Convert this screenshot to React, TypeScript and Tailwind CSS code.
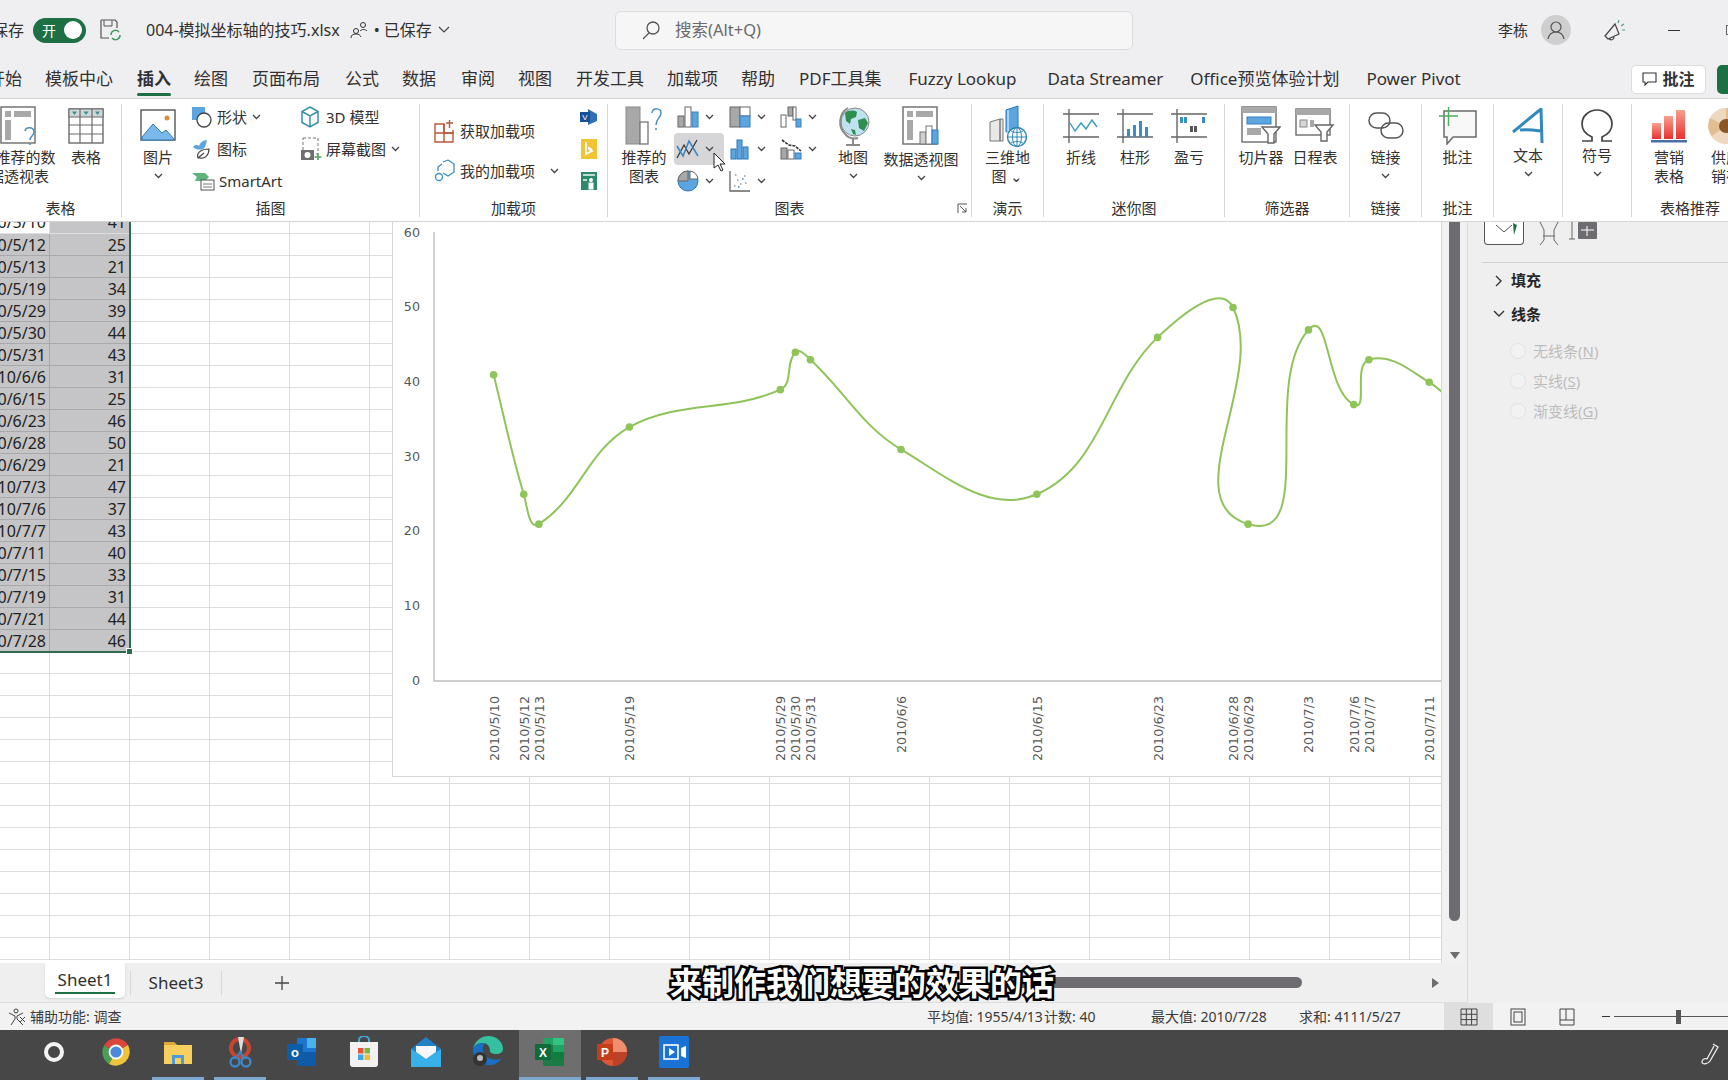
import React from "react";

const GREY = "#a8a8a8";
const DARK = "#6b6b6b";
const BLUE = "#5ba6e1";

function Chev({ className = "" }: { className?: string }) {
  return (
    <svg width="9" height="6" viewBox="0 0 9 6" className={"shrink-0 " + className}>
      <path d="M1 1l3.5 3.5L8 1" fill="none" stroke="#444" strokeWidth="1.3" />
    </svg>
  );
}

function Big({ w, icon, lines, chev, className = "" }: { w: string; icon: React.ReactNode; lines: string[]; chev?: boolean; className?: string }) {
  return (
    <div className={"flex flex-col items-center shrink-0 " + w + " " + className}>
      <div className="h-[44px] w-full flex items-center justify-center shrink-0">{icon}</div>
      {lines.map((l, i) => (
        <div key={i} className="leading-[19px] h-[19px] whitespace-nowrap">{l}</div>
      ))}
      {chev && <div className="h-[17px] flex items-center"><Chev /></div>}
    </div>
  );
}

function Small({ icon, label, chev, className = "" }: { icon: React.ReactNode; label?: string; chev?: boolean; className?: string }) {
  return (
    <div className={"h-[32px] flex items-center whitespace-nowrap " + className}>
      {icon}
      {label && <span className="ml-[4px]">{label}</span>}
      {chev && <Chev className="ml-[5px]" />}
    </div>
  );
}

function ChartBtn({ icon, active }: { icon: React.ReactNode; active?: boolean }) {
  return (
    <div className={"h-[32px] w-[50px] flex items-center rounded pl-[2px] " + (active ? "bg-[#d6d5d7]" : "")}>
      <div className="w-[24px] flex justify-center">{icon}</div>
      <Chev className="ml-[5px]" />
    </div>
  );
}

function Group({ w, label, children, extra }: { w: string; label?: string; children: React.ReactNode; extra?: React.ReactNode }) {
  return (
    <div className={"shrink-0 flex flex-col h-[113px] mt-[5px] border-r border-[#d6d6d6] " + w}>
      <div className="h-[96px] flex">{children}</div>
      <div className="h-[17px] leading-[17px] flex justify-center items-center relative overflow-visible whitespace-nowrap">
        {label}
        {extra}
      </div>
    </div>
  );
}

/* ---------- ribbon icons ---------- */
const PivotRec = () => (
  <svg width="38" height="40" viewBox="0 0 38 40">
    <rect x="1" y="1" width="34" height="36" fill="#fff" stroke={DARK} strokeWidth="1.4" />
    <rect x="5" y="5" width="6" height="6" fill={GREY} /><rect x="14" y="5" width="17" height="6" fill={GREY} />
    <rect x="5" y="14" width="6" height="20" fill={GREY} />
    <path d="M25 25c1-5 9-4 9 1 0 4-4 4-4 8M30 37v2" fill="none" stroke="#4a90c2" strokeWidth="1.6" />
  </svg>
);
const TableIc = () => (
  <svg width="36" height="36" viewBox="0 0 36 36">
    <rect x="1" y="1" width="34" height="34" fill="#fff" stroke={DARK} strokeWidth="1.4" />
    <rect x="1" y="1" width="34" height="8" fill="#cfd8d8" stroke={DARK} />
    <path d="M12 1v34M24 1v34M1 17h34M1 26h34" stroke={DARK} strokeWidth="1.2" />
    <path d="M4 3.5h5L6.5 7zM15.5 3.5h5L18 7zM27 3.5h5L29.5 7z" fill="#3f8f93" />
  </svg>
);
const PictureIc = () => (
  <svg width="36" height="34" viewBox="0 0 36 34">
    <rect x="1" y="1" width="34" height="30" fill="#fff" stroke="#555" strokeWidth="1.4" />
    <path d="M2 28l11-13 9 9 4-3 8 9v1H2z" fill="#7bb8ea" stroke="#2f7ab8" />
    <circle cx="27" cy="9" r="2.5" fill="#e08a3c" />
  </svg>
);
const ShapeIc = () => (
  <svg width="22" height="22" viewBox="0 0 22 22">
    <rect x="1" y="1" width="13" height="13" fill={BLUE} />
    <circle cx="13" cy="14" r="7" fill="#fff" stroke="#444" strokeWidth="1.3" />
  </svg>
);
const IconIc = () => (
  <svg width="22" height="22" viewBox="0 0 22 22">
    <path d="M2 9c2-3 5-2 6-1 1-3 4-6 8-6-1 3-1 7-4 9-3 1-7 1-10-2z" fill={BLUE} />
    <path d="M7 20c-2-5 3-9 11-9 0 6-4 10-9 9zM7 20l6-5" fill="#fff" stroke="#444" strokeWidth="1.2" />
  </svg>
);
const SmartArtIc = () => (
  <svg width="24" height="20" viewBox="0 0 24 20">
    <path d="M1 2h13l4 4-4 4H4l2-4z" fill="#5fb37c" />
    <rect x="10" y="9" width="13" height="10" fill="#fff" stroke="#555" />
    <path d="M12 13h9M12 16h9" stroke="#777" />
  </svg>
);
const Box3D = () => (
  <svg width="20" height="22" viewBox="0 0 20 22">
    <path d="M10 1l8 4.5v11L10 21l-8-4.5v-11zM2 5.5l8 4.5 8-4.5M10 10v11" fill="#fff" stroke="#3a8ea8" strokeWidth="1.5" />
  </svg>
);
const ScreenIc = () => (
  <svg width="22" height="24" viewBox="0 0 22 24">
    <rect x="3" y="1" width="15" height="16" fill="none" stroke="#777" strokeDasharray="3 2" />
    <rect x="1" y="13" width="13" height="10" fill="#6f6f6f" />
    <circle cx="7.5" cy="18" r="3" fill="#fff" />
    <path d="M18 16v7M14.5 20h7" stroke="#54a45f" strokeWidth="1.6" />
  </svg>
);
const GetAddin = () => (
  <svg width="22" height="24" viewBox="0 0 22 24">
    <path d="M1 5h9v9H1zM10 14h9v9h-9zM1 14h9v9H1zM12 4h7M15.5 1v8" fill="#fff" stroke="#b9583a" strokeWidth="1.4" />
    <path d="M10 5v9h9v-3" fill="none" stroke="#b9583a" strokeWidth="1.4" />
  </svg>
);
const MyAddin = () => (
  <svg width="22" height="24" viewBox="0 0 22 24">
    <path d="M14 1l6 4v8l-6 4-5-3M9 3l5-2M4 12v-4l4-3" fill="none" stroke="#3a8ec4" strokeWidth="1.3" />
    <circle cx="5" cy="18" r="3.5" fill="#fff" stroke="#3a8ec4" strokeWidth="1.3" />
  </svg>
);
const Visio = () => (
  <svg width="18" height="18" viewBox="0 0 18 18">
    <path d="M8 1l9 5v7l-9 4z" fill="#2f6fb5" /><rect x="0" y="4" width="10" height="10" fill="#1b4f93" />
    <text x="5" y="12" fontSize="8" fill="#fff" textAnchor="middle" fontFamily="Liberation Sans">V</text>
  </svg>
);
const Bing = () => (
  <svg width="16" height="20" viewBox="0 0 16 20">
    <rect width="16" height="20" fill="#f2c335" />
    <path d="M5 3v12l6-3-3-2v-1l3 1.5" fill="none" stroke="#fff" strokeWidth="1.8" />
  </svg>
);
const People = () => (
  <svg width="16" height="18" viewBox="0 0 16 18">
    <rect width="16" height="18" fill="#2c8a6a" />
    <rect x="2" y="2" width="12" height="2" fill="#fff" opacity=".7" />
    <circle cx="10" cy="8" r="2" fill="#fff" /><rect x="7.5" y="10.5" width="5" height="7" fill="#fff" />
    <rect x="2" y="7" width="4" height="2" fill="#fff" opacity=".7" />
  </svg>
);
const RecChart = () => (
  <svg width="38" height="40" viewBox="0 0 38 40">
    <rect x="1" y="1" width="14" height="37" fill={GREY} stroke="#8a8a8a" />
    <rect x="15" y="16" width="8" height="22" fill="#fff" stroke="#777" strokeWidth="1.3" />
    <path d="M27 7c1-6 9-5 9 0 0 5-5 5-5 12M31 22v2" fill="none" stroke="#4a90c2" strokeWidth="1.5" />
  </svg>
);
const ColIc = () => (
  <svg width="22" height="22" viewBox="0 0 22 22">
    <rect x="1" y="10" width="6" height="11" fill={GREY} stroke="#666" /><rect x="8" y="1" width="6" height="20" fill="#fff" stroke="#666" /><rect x="15" y="6" width="6" height="15" fill={BLUE} stroke="#3a7ebd" />
  </svg>
);
const Hier = () => (
  <svg width="22" height="22" viewBox="0 0 22 22">
    <rect x="1" y="1" width="10" height="20" fill={GREY} stroke="#666" /><rect x="11" y="1" width="10" height="9" fill="#fff" stroke="#666" /><rect x="11" y="10" width="10" height="11" fill={BLUE} stroke="#3a7ebd" />
  </svg>
);
const Water = () => (
  <svg width="22" height="22" viewBox="0 0 22 22">
    <rect x="1" y="9" width="5" height="12" fill="#fff" stroke="#666" /><rect x="8" y="1" width="5" height="9" fill={GREY} stroke="#666" /><rect x="13" y="1" width="3" height="13" fill="#fff" stroke="#666" /><rect x="16" y="13" width="5" height="8" fill={BLUE} stroke="#3a7ebd" />
  </svg>
);
const LineIc = () => (
  <svg width="24" height="22" viewBox="0 0 24 22">
    <path d="M1 20L8 7l5 9 8-14" fill="none" stroke="#3a3a3a" strokeWidth="1.3" />
    <path d="M1 8l6 10 6-15 9 15" fill="none" stroke="#3a86c4" strokeWidth="1.5" />
  </svg>
);
const Stat = () => (
  <svg width="20" height="22" viewBox="0 0 20 22">
    <rect x="1" y="11" width="5" height="10" fill={BLUE} stroke="#2f76b5" /><rect x="7" y="2" width="5" height="19" fill={BLUE} stroke="#2f76b5" /><rect x="13" y="9" width="5" height="12" fill={BLUE} stroke="#2f76b5" />
  </svg>
);
const Combo = () => (
  <svg width="22" height="22" viewBox="0 0 22 22">
    <rect x="1" y="10" width="6" height="11" fill={GREY} stroke="#666" /><rect x="8" y="12" width="6" height="9" fill="#fff" stroke="#666" /><rect x="15" y="15" width="6" height="6" fill={BLUE} stroke="#3a7ebd" />
    <path d="M2 2l7 5 6 1 6 5" fill="none" stroke="#333" strokeWidth="1.6" strokeDasharray="3 1" />
  </svg>
);
const Pie = () => (
  <svg width="22" height="22" viewBox="0 0 22 22">
    <circle cx="11" cy="11" r="10" fill={BLUE} stroke="#2f76b5" />
    <path d="M11 11V1a10 10 0 0 0-10 10z" fill={GREY} stroke="#666" />
    <path d="M13 9V1a9 9 0 0 1 8 8z" fill="#fff" stroke="#666" />
  </svg>
);
const Scatter = () => (
  <svg width="22" height="22" viewBox="0 0 22 22">
    <path d="M1 1v20h20" fill="none" stroke="#666" strokeWidth="1.3" />
    <path d="M5 16h1.5M8 10h1.5M11 14h1.5M15 6h1.5M6 5h1.5M16 13h1.5" stroke="#999" strokeWidth="1.5" />
    <path d="M9 17h1.5M13 9h1.5" stroke="#3a86c4" strokeWidth="1.5" />
  </svg>
);
const Globe = () => (
  <svg width="34" height="42" viewBox="0 0 34 42">
    <circle cx="19" cy="17" r="14" fill="#bfe2f0" stroke="#888" />
    <path d="M9 8c4-3 9-3 12-1l-1 5-5 2-1 5-4-3zM22 15l7-2 3 5-4 8-5-3zM15 24l4 1 1 5-3-1z" fill="#2f8f4e" />
    <path d="M12 3C3 8 1 22 10 30c3 3 8 4 12 3" fill="none" stroke="#8a8a8a" strokeWidth="2" />
    <path d="M17 34v5M10 40h14" stroke="#8a8a8a" strokeWidth="2" />
  </svg>
);
const PivotChart = () => (
  <svg width="38" height="40" viewBox="0 0 38 40">
    <rect x="1" y="1" width="34" height="37" fill="#fff" stroke={DARK} strokeWidth="1.4" />
    <rect x="5" y="5" width="6" height="6" fill={GREY} /><rect x="14" y="5" width="17" height="6" fill={GREY} />
    <rect x="5" y="14" width="6" height="20" fill={GREY} />
    <rect x="18" y="26" width="6" height="12" fill="#cfcfcf" stroke="#777" /><rect x="24" y="20" width="6" height="18" fill="#fff" stroke="#777" /><rect x="30" y="24" width="6" height="14" fill={BLUE} stroke="#3a7ebd" />
  </svg>
);
const Map3D = () => (
  <svg width="40" height="44" viewBox="0 0 40 44">
    <path d="M2 18l10-3v22H2zM12 15h3v22h-3z" fill="#e8e8e8" stroke="#777" />
    <path d="M18 6l12-4v26H18z" fill={BLUE} stroke="#2f76b5" /><path d="M20 6v28" stroke="#fff" />
    <circle cx="29" cy="33" r="9.5" fill="#fff" stroke="#2f86b8" strokeWidth="1.4" />
    <path d="M20 33h18M29 24v18M23 27c4 2 8 2 12 0M23 39c4-2 8-2 12 0" fill="none" stroke="#2f86b8" />
    <ellipse cx="29" cy="33" rx="4.5" ry="9.5" fill="none" stroke="#2f86b8" />
  </svg>
);
const SparkLine = () => (
  <svg width="36" height="34" viewBox="0 0 36 34">
    <path d="M0 5h36M0 28h36M6 0v34" stroke="#666" strokeWidth="1.4" />
    <path d="M7 14l5 8 6-8 5 6 6-9 5 7" fill="none" stroke="#3a9fb8" strokeWidth="1.4" />
  </svg>
);
const SparkCol = () => (
  <svg width="36" height="34" viewBox="0 0 36 34">
    <path d="M0 5h36M0 28h36M6 0v34" stroke="#666" strokeWidth="1.4" />
    <path d="M10 20h3v8h-3zM16 16h3v12h-3zM22 12h3v16h-3zM28 18h3v10h-3z" fill="#3a8ec4" />
  </svg>
);
const SparkWin = () => (
  <svg width="36" height="34" viewBox="0 0 36 34">
    <path d="M0 5h36M0 28h36M6 0v34" stroke="#666" strokeWidth="1.4" />
    <path d="M9 8h3v6H9zM13 8h3v6h-3zM31 8h3v6h-3z" fill="#3a8ec4" />
    <path d="M19 17h3v6h-3zM23 17h3v6h-3z" fill="#555" />
  </svg>
);
const Funnel = ({ x, y }: { x: number; y: number }) => (
  <path d={`M${x} ${y}h18l-6 7v9h-6v-9z`} fill="#fff" stroke="#666" strokeWidth="1.4" />
);
const Slicer = () => (
  <svg width="40" height="40" viewBox="0 0 40 40">
    <rect x="1" y="1" width="34" height="35" fill="#fff" stroke={DARK} strokeWidth="1.4" />
    <rect x="1" y="1" width="34" height="6" fill={GREY} />
    <rect x="6" y="11" width="24" height="7" fill={BLUE} stroke="#3a7ebd" />
    <rect x="6" y="22" width="14" height="7" fill={GREY} />
    <Funnel x={21} y={21} />
  </svg>
);
const Timeline = () => (
  <svg width="40" height="36" viewBox="0 0 40 36">
    <rect x="1" y="1" width="34" height="26" fill="#fff" stroke={DARK} strokeWidth="1.4" />
    <rect x="1" y="1" width="34" height="6" fill={GREY} />
    <rect x="5" y="12" width="7" height="7" fill="#d6d6d6" stroke="#888" /><rect x="15" y="12" width="4" height="7" fill={GREY} />
    <Funnel x={20} y={17} />
  </svg>
);
const LinkIc = () => (
  <svg width="36" height="28" viewBox="0 0 36 28">
    <rect x="1" y="1" width="21" height="15" rx="7.5" fill="none" stroke="#555" strokeWidth="1.5" />
    <rect x="13" y="11" width="22" height="15" rx="7.5" fill="none" stroke="#555" strokeWidth="1.5" />
  </svg>
);
const CommentIc = () => (
  <svg width="38" height="38" viewBox="0 0 38 38">
    <path d="M5 4h32v26H14l-6 7v-7H5z" fill="#f8f8f8" stroke="#6b6b6b" strokeWidth="1.5" />
    <path d="M0 9h19M9.5 0v19" stroke="#4caf62" strokeWidth="1.4" />
  </svg>
);
const TextA = () => (
  <svg width="32" height="36" viewBox="0 0 32 36">
    <path d="M1 24C11 16 20 8 29 1l1 34M8 22c7-1 14 0 21 1" fill="none" stroke="#3488c0" strokeWidth="3" />
  </svg>
);
const Omega = () => (
  <svg width="32" height="34" viewBox="0 0 32 34">
    <path d="M1 32h10v-4C4 25 1 20 1 15 1 7 8 1 16 1s15 6 15 14c0 5-3 10-10 13v4h10" fill="none" stroke="#444" strokeWidth="1.7" />
  </svg>
);
const Bars = () => (
  <svg width="36" height="34" viewBox="0 0 36 34">
    <defs><linearGradient id="rb" x1="0" y1="0" x2="0" y2="1"><stop offset="0" stopColor="#f7a08e" /><stop offset="1" stopColor="#e9302f" /></linearGradient></defs>
    <rect x="1" y="14" width="9" height="16" fill="url(#rb)" /><rect x="13" y="7" width="9" height="23" fill="url(#rb)" /><rect x="25" y="1" width="9" height="29" fill="url(#rb)" />
    <rect x="0" y="31" width="36" height="2.5" fill="#4a6fa5" />
  </svg>
);
const Supply = () => (
  <svg width="40" height="38" viewBox="0 0 40 38">
    <circle cx="20" cy="19" r="18" fill="#eed9c0" />
    <path d="M20 1a18 18 0 0 1 16 10L20 19zM4 11a18 18 0 0 0 2 18l14-10z" fill="#e3bd92" />
    <circle cx="20" cy="19" r="7" fill="#8a5527" />
  </svg>
);
const SaveIc = () => (
  <svg width="22" height="22" viewBox="0 0 22 22">
    <path d="M1 1h14l2 2v6M1 1v18h8" fill="none" stroke="#555" strokeWidth="1.2" />
    <path d="M4 1v6h8V1" fill="none" stroke="#555" />
    <path d="M11 16a4.5 4.5 0 0 1 8-3M20 16a4.5 4.5 0 0 1-8 3" fill="none" stroke="#3f9c5f" strokeWidth="1.5" />
  </svg>
);

/* ---------- taskbar icons ---------- */
const Chrome = () => (
  <svg width="28" height="28" viewBox="0 0 28 28">
    <path d="M14 14L2 7.5A14 14 0 0 1 26.1 7z" fill="#d9483b" />
    <path d="M14 14l-7 12A14 14 0 0 1 2 7.5z" fill="#4a9e55" />
    <path d="M14 14l12-7A14 14 0 0 1 7 26z" fill="#f0c33c" />
    <circle cx="14" cy="14" r="6.5" fill="#4a89dc" stroke="#fff" strokeWidth="1.8" />
  </svg>
);
const Files = () => (
  <svg width="28" height="28" viewBox="0 0 28 28">
    <path d="M0 4h10l3 3h15v19H0z" fill="#f6cf5e" /><path d="M0 4h10l3 3H0z" fill="#dfa93a" />
    <path d="M8 26v-9h12v9z" fill="#4f9ad8" /><rect x="11" y="20" width="6" height="6" fill="#f6cf5e" />
  </svg>
);
const Snip = () => (
  <svg width="26" height="32" viewBox="0 0 26 32">
    <circle cx="13" cy="12" r="11" fill="#c8452f" />
    <circle cx="13" cy="12" r="7" fill="#474747" />
    <path d="M11 1l3 17 3-17z" fill="#ddd" />
    <circle cx="8" cy="26" r="4.5" fill="none" stroke="#3c86c9" strokeWidth="2.4" /><circle cx="19" cy="26" r="4.5" fill="none" stroke="#3c86c9" strokeWidth="2.4" />
    <path d="M9 22l4-6 4 6" stroke="#3c86c9" fill="none" strokeWidth="2" />
  </svg>
);
const Outlook = () => (
  <svg width="30" height="30" viewBox="0 0 30 30">
    <rect x="10" y="1" width="19" height="28" fill="#1c76cf" /><rect x="20" y="1" width="9" height="10" fill="#4cb1ea" /><rect x="10" y="15" width="19" height="14" fill="#0f5ba8" />
    <rect x="0" y="7" width="16" height="16" fill="#0d5da9" />
    <text x="8" y="20" fontSize="13" fontWeight="700" fill="#fff" textAnchor="middle" fontFamily="Liberation Sans">o</text>
  </svg>
);
const Store = () => (
  <svg width="30" height="32" viewBox="0 0 30 32">
    <path d="M10 7V4a5 4 0 0 1 10 0v3" fill="none" stroke="#3faad8" strokeWidth="2" />
    <path d="M1 6h28v22a3 3 0 0 1-3 3H4a3 3 0 0 1-3-3z" fill="#f2f2f2" />
    <rect x="9" y="12" width="5.5" height="5.5" fill="#e5543c" /><rect x="15.5" y="12" width="5.5" height="5.5" fill="#79b843" /><rect x="9" y="18.5" width="5.5" height="5.5" fill="#3fa8e4" /><rect x="15.5" y="18.5" width="5.5" height="5.5" fill="#f4b93a" />
  </svg>
);
const Mail = () => (
  <svg width="32" height="30" viewBox="0 0 32 30">
    <path d="M1 12L16 0l15 12v18H1z" fill="#1f82c9" />
    <path d="M1 12l15 10 15-10v18H1z" fill="#38b0ea" />
    <path d="M6 9h20v6l-10 7-10-7z" fill="#f4f6f8" />
  </svg>
);
const Edge = () => (
  <svg width="32" height="34" viewBox="0 0 32 34">
    <path d="M1 14C3 5 10 1 16 1c9 0 15 6 15 13 0 3-3 5-7 5-3 0-6-1-6-3 0-5-3-8-7-8C6 8 3 10 1 14z" fill="#35c1a0" />
    <path d="M1 14c0 8 5 15 14 16 7 1 12-3 15-7-5 3-11 2-15-1-4-3-6-9-2-14-5 0-10 1-12 6z" fill="#1b6fc4" />
    <circle cx="8" cy="24" r="7" fill="#333" /><circle cx="8" cy="23" r="3" fill="#bbb" />
  </svg>
);
const Excel = () => (
  <svg width="30" height="30" viewBox="0 0 30 30">
    <rect x="8" y="1" width="21" height="28" rx="1.5" fill="#1c7a46" /><rect x="18" y="1" width="11" height="7" fill="#33c481" /><rect x="18" y="8" width="11" height="7" fill="#21a366" /><rect x="18" y="15" width="11" height="7" fill="#107c41" /><rect x="8" y="1" width="10" height="7" fill="#21a366" />
    <rect x="0" y="7" width="16" height="16" rx="1" fill="#0f6b3a" />
    <text x="8" y="20" fontSize="12" fontWeight="700" fill="#fff" textAnchor="middle" fontFamily="Liberation Sans">X</text>
  </svg>
);
const Ppt = () => (
  <svg width="30" height="30" viewBox="0 0 30 30">
    <circle cx="16" cy="15" r="14" fill="#d9583a" /><path d="M16 1a14 14 0 0 1 14 14H16z" fill="#ef8d6e" /><path d="M16 15h14a14 14 0 0 1-14 14z" fill="#bb4226" />
    <rect x="0" y="7" width="16" height="16" rx="1" fill="#c43e1c" />
    <text x="8" y="20" fontSize="12" fontWeight="700" fill="#fff" textAnchor="middle" fontFamily="Liberation Sans">P</text>
  </svg>
);
const VideoIc = () => (
  <svg width="30" height="32" viewBox="0 0 30 32">
    <rect width="30" height="32" rx="2" fill="#1a73d4" />
    <rect x="5" y="9" width="14" height="14" fill="none" stroke="#fff" strokeWidth="1.6" />
    <path d="M10 12l6 4-6 4z" fill="#fff" /><path d="M22 12l5-2v12l-5-2z" fill="#fff" />
  </svg>
);

/* ---------- data ---------- */
const DATA: [string, number, number][] = [
  ["2010/5/10", 41, 0], ["2010/5/12", 25, 2], ["2010/5/13", 21, 3], ["2010/5/19", 34, 9], ["2010/5/29", 39, 19],
  ["2010/5/30", 44, 20], ["2010/5/31", 43, 21], ["2010/6/6", 31, 27], ["2010/6/15", 25, 36], ["2010/6/23", 46, 44],
  ["2010/6/28", 50, 49], ["2010/6/29", 21, 50], ["2010/7/3", 47, 54], ["2010/7/6", 37, 57], ["2010/7/7", 43, 58],
  ["2010/7/11", 40, 62], ["2010/7/15", 33, 66], ["2010/7/19", 31, 70], ["2010/7/21", 44, 72], ["2010/7/28", 46, 79],
];
const px = (d: number) => 492.6 + 15.09 * d;
const py = (v: number) => 681 - 7.47 * v;
const PTS = DATA.map(([, v, d]) => [px(d), py(v)] as [number, number]);

function smooth(p: [number, number][]) {
  const tan = p.map((_, i) => {
    const a = p[Math.max(0, i - 1)], b = p[Math.min(p.length - 1, i + 1)];
    const dx = b[0] - a[0], dy = b[1] - a[1];
    const l = Math.hypot(dx, dy) || 1;
    return [dx / l, dy / l];
  });
  let d = `M${p[0][0]} ${p[0][1]}`;
  for (let i = 0; i < p.length - 1; i++) {
    const len = Math.hypot(p[i + 1][0] - p[i][0], p[i + 1][1] - p[i][1]) * 0.36;
    d += ` C${p[i][0] + tan[i][0] * len} ${p[i][1] + tan[i][1] * len} ${p[i + 1][0] - tan[i + 1][0] * len} ${p[i + 1][1] - tan[i + 1][1] * len} ${p[i + 1][0]} ${p[i + 1][1]}`;
  }
  return d;
}

const COLS = Array.from({ length: 17 }, (_, i) => i);
const ROWS = Array.from({ length: 33 }, (_, i) => i);

function Sheet() {
  return (
    <div className="relative flex-1 overflow-hidden bg-white text-[16px] text-[#222] border-r border-[#d8d8d8]">
      <div className="flex h-[12px] border-b border-[#dedcde]">
        <div className="w-[50px] shrink-0 border-r border-[#dedcde] flex justify-end items-end pr-[3px] whitespace-nowrap overflow-hidden leading-[22px]">{DATA[0][0]}</div>
        <div className="w-[80px] shrink-0 border-r border-[#dedcde] bg-[#c5c4c6] flex justify-end items-end pr-[3px] overflow-hidden leading-[22px]">{DATA[0][1]}</div>
        {COLS.map((c) => <div key={c} className="w-[80px] shrink-0 border-r border-[#dedcde]" />)}
      </div>
      {ROWS.map((r) => {
        const row = DATA[r + 1];
        return (
          <div key={r} className="flex h-[22px] border-b border-[#dedcde]">
            <div className={"w-[50px] shrink-0 border-r flex justify-end items-center pr-[3px] whitespace-nowrap overflow-hidden " + (row ? "bg-[#c5c4c6] border-[#a9a9ab] border-b border-b-[#a9a9ab] -mb-px" : "border-[#dedcde]")}>{row?.[0]}</div>
            <div className={"w-[80px] shrink-0 border-r flex justify-end items-center pr-[3px] " + (row ? "bg-[#c5c4c6] border-[#c5c4c6] border-b border-b-[#a9a9ab] -mb-px" : "border-[#dedcde]")}>{row?.[1]}</div>
            {COLS.map((c) => <div key={c} className="w-[80px] shrink-0 border-r border-[#dedcde]" />)}
          </div>
        );
      })}
      {/* selection outline */}
      <div className="absolute left-0 top-0 w-[131px] h-[431px] border-r-[2px] border-b-[2px] border-[#2f6a50]" />
      <div className="absolute left-[126px] top-[426px] w-[7px] h-[7px] bg-[#2f6a50] border border-white" />
      {/* embedded chart */}
      <div className="absolute left-[392px] top-0 w-[1050px] h-[555px] bg-white border-l border-b border-[#d6d6d6] overflow-hidden">
        <svg width="1050" height="554" viewBox="392 222 1050 554" className="block">
          <path d="M433 232V681H1442" fill="none" stroke="#bfbfbf" strokeWidth="1.4" />
          {[60, 50, 40, 30, 20, 10, 0].map((v, i) => (
            <text key={v} x="419" y={232 + i * 74.7 + 4.5} textAnchor="end" fontSize="12.7" fill="#595959" fontFamily="DejaVu Sans">{v}</text>
          ))}
          {DATA.slice(0, 16).map(([t, , d]) => (
            <text key={t} transform={`translate(${px(d) + 5} 696) rotate(-90)`} textAnchor="end" fontSize="12.7" fill="#595959" fontFamily="DejaVu Sans">{t}</text>
          ))}
          <path d={smooth(PTS)} fill="none" stroke="#8fc45a" strokeWidth="2" />
          {PTS.map((p, i) => <circle key={i} cx={p[0]} cy={p[1]} r="3.8" fill="#8fc45a" />)}
        </svg>
      </div>
    </div>
  );
}

const SepV = () => <div className="w-px h-[24px] bg-[#d6d6d6]" />;

export default function App() {
  const tabs: [string, string][] = [
    ["开始", "-ml-[12px]"], ["模板中心", "ml-[23px]"], ["插入", "ml-[24px]"], ["绘图", "ml-[23px]"], ["页面布局", "ml-[24px]"], ["公式", "ml-[25px]"],
    ["数据", "ml-[23px]"], ["审阅", "ml-[25px]"], ["视图", "ml-[23px]"], ["开发工具", "ml-[24px]"], ["加载项", "ml-[23px]"], ["帮助", "ml-[23px]"],
    ["PDF工具集", "ml-[24px]"], ["Fuzzy Lookup", "ml-[27px]"], ["Data Streamer", "ml-[31px]"], ["Office预览体验计划", "ml-[27px]"], ["Power Pivot", "ml-[27px]"],
  ];
  const task: [React.ReactNode, boolean, boolean][] = [
    [<div className="w-[20px] h-[20px] rounded-full border-[4px] border-[#f4f4f4]" />, false, false],
    [<Chrome />, false, false], [<Files />, true, false], [<Snip />, true, false], [<Outlook />, false, false], [<Store />, false, false],
    [<Mail />, false, false], [<Edge />, false, false], [<Excel />, true, true], [<Ppt />, true, false], [<VideoIc />, true, false],
  ];
  return (
    <div className="relative w-[1728px] h-[1080px] overflow-hidden flex flex-col bg-[#efeef0] text-[#323130] text-[15px] [font-family:'Noto_Sans','Noto_Sans_CJK_SC',sans-serif]">
      {/* title bar */}
      <div className="h-[60px] shrink-0 flex items-center">
        <div className="w-[615px] shrink-0 flex items-center text-[16px] whitespace-nowrap overflow-hidden">
          <span className="-ml-[8px]">保存</span>
          <div className="ml-[9px] w-[53px] h-[25px] rounded-full bg-[#1d7044] flex items-center justify-between pl-[9px] pr-[4px] text-white text-[14px]">
            <span>开</span><span className="w-[18px] h-[18px] rounded-full bg-white" />
          </div>
          <div className="ml-[14px]"><SaveIc /></div>
          <span className="ml-[24px]">004-模拟坐标轴的技巧.xlsx</span>
          <svg width="18" height="18" viewBox="0 0 18 18" className="ml-[10px]">
            <circle cx="6" cy="10" r="2.5" fill="none" stroke="#333" /><path d="M1 17c0-3 2-4 5-4s4 1 5 3" fill="none" stroke="#333" /><circle cx="13" cy="4" r="2.5" fill="none" stroke="#333" /><path d="M10 10c2-2 5-2 7 0" fill="none" stroke="#333" />
          </svg>
          <span className="ml-[6px]">• 已保存</span>
          <svg width="12" height="8" viewBox="0 0 12 8" className="ml-[6px]"><path d="M1 1l5 5 5-5" fill="none" stroke="#444" strokeWidth="1.2" /></svg>
        </div>
        <div className="w-[518px] h-[39px] shrink-0 rounded-md border border-[#dddcdd] bg-[#f7f6f7] flex items-center pl-[25px] text-[#6a6a6a] text-[16.5px]">
          <svg width="20" height="20" viewBox="0 0 20 20" className="shrink-0"><circle cx="12" cy="8" r="6" fill="none" stroke="#555" strokeWidth="1.3" /><path d="M8 13l-6 6" stroke="#555" strokeWidth="1.3" /></svg>
          <span className="ml-[14px]">搜索(Alt+Q)</span>
        </div>
        <div className="flex-1 flex items-center justify-end text-[15px]">
          <span>李栋</span>
          <div className="ml-[13px] w-[30px] h-[30px] rounded-full bg-[#d0cfd0] flex items-center justify-center">
            <svg width="20" height="20" viewBox="0 0 20 20"><circle cx="10" cy="7" r="5" fill="none" stroke="#555" strokeWidth="1.2" /><path d="M2 19c1-5 4-7 8-7s7 2 8 7" fill="none" stroke="#555" strokeWidth="1.2" /></svg>
          </div>
          <svg width="22" height="24" viewBox="0 0 22 24" className="ml-[33px]">
            <path d="M1 18L11 6l4 10-11 5zM5 20c1 3 5 2 5-1" fill="none" stroke="#444" strokeWidth="1.2" /><path d="M14 5l1-3M17 8l3-2M18 12h3" stroke="#4a9e8c" strokeWidth="1.2" />
          </svg>
          <div className="ml-[42px] w-[12px] h-px bg-[#333]" />
          <div className="ml-[46px] -mr-[8px] w-[10px] h-[10px] border border-[#666]" />
        </div>
      </div>
      {/* tabs */}
      <div className="h-[39px] shrink-0 flex items-center text-[17px] whitespace-nowrap border-b border-[#d2d2d2]">
        {tabs.map(([t, c]) => (
          <div key={t} className={"relative h-full flex items-center " + c + (t === "插入" ? " font-bold" : "")}>
            {t}
            {t === "插入" && <div className="absolute left-0 right-0 bottom-[2px] h-[3px] bg-[#1d7044] rounded-full" />}
          </div>
        ))}
        <div className="ml-auto w-[75px] h-[29px] rounded-[5px] bg-white border border-[#dcdcdc] flex items-center justify-center gap-[5px] font-bold text-[16px]">
          <svg width="15" height="14" viewBox="0 0 15 14"><path d="M1 1h13v9H6l-3 3v-3H1z" fill="none" stroke="#333" strokeWidth="1.1" /></svg>
          批注
        </div>
        <div className="ml-[11px] w-[11px] h-[29px] rounded-l-[5px] bg-[#1d7044]" />
      </div>
      {/* ribbon */}
      <div className="h-[123px] shrink-0 bg-white border-b border-[#d4d4d4] flex overflow-hidden">
        <Group w="w-[122px]" label="表格">
          <div className="-ml-[17px] flex">
            <Big w="w-[72px]" icon={<PivotRec />} lines={["推荐的数", "据透视表"]} className="[&>div:nth-child(2)]:pl-[13px]" />
            <Big w="w-[60px]" className="ml-[1px]" icon={<TableIc />} lines={["表格"]} />
          </div>
        </Group>
        <Group w="w-[298px]" label="插图">
          <Big w="w-[50px]" className="ml-[11px]" icon={<PictureIc />} lines={["图片"]} chev />
          <div className="flex flex-col -mt-[3px] ml-[8px] w-[109px]">
            <Small icon={<ShapeIc />} label="形状" chev />
            <Small icon={<IconIc />} label="图标" />
            <Small icon={<SmartArtIc />} label="SmartArt" />
          </div>
          <div className="flex flex-col -mt-[3px]">
            <Small icon={<Box3D />} label="3D 模型" className="[&>span]:ml-[6px]" />
            <Small icon={<ScreenIc />} label="屏幕截图" chev />
          </div>
        </Group>
        <Group w="w-[188px]" label="加载项">
          <div className="flex flex-col ml-[14px] w-[134px] pt-[7px]">
            <Small icon={<GetAddin />} label="获取加载项" className="h-[40px]" />
            <Small icon={<MyAddin />} label="我的加载项" chev className="h-[40px] [&>svg:last-child]:ml-[15px]" />
          </div>
          <div className="flex flex-col -mt-[3px] w-[30px] items-center ml-[6px]">
            <div className="h-[32px] flex items-center"><Visio /></div>
            <div className="h-[32px] flex items-center"><Bing /></div>
            <div className="h-[32px] flex items-center"><People /></div>
          </div>
        </Group>
        <Group w="w-[364px]" label="图表" extra={<svg width="11" height="11" viewBox="0 0 11 11" className="absolute right-[3px] top-[3px]"><path d="M1 10V1h9M3 3l6 6M9 5v4H5" fill="none" stroke="#555" /></svg>}>
          <Big w="w-[60px]" className="ml-[6px]" icon={<RecChart />} lines={["推荐的", "图表"]} />
          <div className="flex flex-col -mt-[3px] w-[52px]">
            <ChartBtn icon={<ColIc />} />
            <ChartBtn icon={<LineIc />} active />
            <ChartBtn icon={<Pie />} />
          </div>
          <div className="flex flex-col -mt-[3px] w-[51px]">
            <ChartBtn icon={<Hier />} />
            <ChartBtn icon={<Stat />} />
            <ChartBtn icon={<Scatter />} />
          </div>
          <div className="flex flex-col -mt-[3px] w-[50px]">
            <ChartBtn icon={<Water />} />
            <ChartBtn icon={<Combo />} />
          </div>
          <Big w="w-[50px]" className="ml-[1px]" icon={<Globe />} lines={["地图"]} chev />
          <Big w="w-[86px]" icon={<PivotChart />} lines={["数据透视图"]} chev className="[&>div:nth-child(2)]:mt-[2px]" />
        </Group>
        <Group w="w-[72px]" label="演示">
          <Big w="w-full" icon={<Map3D />} lines={["三维地", "图 ⌄"]} />
        </Group>
        <Group w="w-[181px]" label="迷你图">
          <Big w="w-[54px]" className="ml-[10px]" icon={<SparkLine />} lines={["折线"]} />
          <Big w="w-[54px]" icon={<SparkCol />} lines={["柱形"]} />
          <Big w="w-[54px]" icon={<SparkWin />} lines={["盈亏"]} />
        </Group>
        <Group w="w-[125px]" label="筛选器">
          <Big w="w-[54px]" className="ml-[9px]" icon={<Slicer />} lines={["切片器"]} />
          <Big w="w-[54px]" icon={<Timeline />} lines={["日程表"]} />
        </Group>
        <Group w="w-[72px]" label="链接">
          <Big w="w-full" icon={<LinkIc />} lines={["链接"]} chev />
        </Group>
        <Group w="w-[72px]" label="批注">
          <Big w="w-full" icon={<CommentIc />} lines={["批注"]} />
        </Group>
        <Group w="w-[69px]">
          <Big w="w-full" icon={<TextA />} lines={["文本"]} chev className="[&>div:nth-child(2)]:-mt-[2px]" />
        </Group>
        <Group w="w-[69px]">
          <Big w="w-full" icon={<Omega />} lines={["符号"]} chev className="[&>div:nth-child(2)]:-mt-[2px]" />
        </Group>
        <div className="shrink-0 flex flex-col w-[120px] h-[113px] mt-[5px]">
          <div className="h-[96px] flex">
            <Big w="w-[54px]" className="ml-[10px]" icon={<Bars />} lines={["营销", "表格"]} />
            <Big w="w-[60px]" icon={<Supply />} lines={["供应", "销存"]} />
          </div>
          <div className="h-[17px] leading-[17px] pl-[28px] whitespace-nowrap">表格推荐</div>
        </div>
      </div>
      {/* main */}
      <div className="flex-1 flex min-h-0">
        <div className="w-[1468px] shrink-0 flex flex-col border-r border-[#dcdbdc]">
          <div className="flex-1 flex min-h-0">
            <Sheet />
            <div className="w-[25px] shrink-0 bg-[#f2f1f2] flex flex-col items-center">
              <div className="w-[11px] h-[699px] rounded-b-full bg-[#6e6c70] shrink-0" />
              <svg width="12" height="9" viewBox="0 0 12 9" className="mt-[30px] shrink-0"><path d="M1 1h10L6 8z" fill="#6e6c70" /></svg>
            </div>
          </div>
          <div className="h-[40px] shrink-0 flex items-center bg-[#f0eff0] border-b border-[#dfdedf] text-[17px]">
            <div className="ml-[45px] w-[80px] h-[35px] self-start rounded-b-[5px] bg-white flex flex-col items-center justify-center shadow-sm">
              <span className="leading-[24px]">Sheet1</span>
              <div className="w-[60px] h-[2px] bg-[#1d7044]" />
            </div>
            <div className="ml-[5px]"><SepV /></div>
            <div className="w-[90px] text-center">Sheet3</div>
            <SepV />
            <svg width="16" height="16" viewBox="0 0 16 16" className="ml-[52px]"><path d="M8 1v14M1 8h14" stroke="#444" strokeWidth="1.3" /></svg>
            <div className="ml-[712px] w-[300px] h-[11px] rounded-full bg-[#6e6c70]" />
            <svg width="9" height="12" viewBox="0 0 9 12" className="ml-[129px]"><path d="M1 1l7 5-7 5z" fill="#6e6c70" /></svg>
          </div>
        </div>
        {/* side panel */}
        <div className="flex-1 bg-[#f0eff0] text-[15px]">
          <div className="h-[23px] flex items-end pl-[16px] overflow-hidden">
            <div className="w-[40px] h-[23px] border border-t-0 border-[#555] rounded-b-[4px] bg-white flex items-center justify-center">
              <svg width="30" height="20" viewBox="0 0 30 20"><path d="M7 2l8 7 8-7" fill="none" stroke="#555" /><path d="M24 0l4 2-3 10z" fill="#1d7044" /></svg>
            </div>
            <svg width="24" height="23" viewBox="0 0 24 23" className="ml-[13px]"><path d="M3 0l4 8v10l-4 5M21 0l-4 8v10l4 5M6 14h12" fill="none" stroke="#666" /></svg>
            <svg width="28" height="23" viewBox="0 0 28 23" className="ml-[8px]"><path d="M3 0v17M0 17h6" stroke="#666" /><rect x="9" y="0" width="19" height="17" rx="1" fill="#6e6c70" /><path d="M12 8h13M18 4v10" stroke="#fff" /></svg>
          </div>
          <div className="h-[18px] ml-[14px] border-b border-[#cfcfcf]" />
          <div className="pl-[30px] h-[33px] flex items-center font-bold text-[#262626] mt-px">
            <svg width="8" height="12" viewBox="0 0 8 12" className="-ml-[3px] mr-[8px]"><path d="M1 1l5 5-5 5" fill="none" stroke="#333" strokeWidth="1.4" /></svg>
            填充
          </div>
          <div className="pl-[30px] h-[34px] flex items-center font-bold text-[#262626]">
            <svg width="12" height="8" viewBox="0 0 12 8" className="-ml-[5px] mr-[6px]"><path d="M1 1l5 5 5-5" fill="none" stroke="#333" strokeWidth="1.4" /></svg>
            线条
          </div>
          <div className="pt-[5px] text-[#bdbcbd]">
            {[["无线条(", "N"], ["实线(", "S"], ["渐变线(", "G"]].map(([a, b]) => (
              <div key={b} className="h-[30px] flex items-center pl-[42px]">
                <div className="w-[16px] h-[16px] rounded-full border border-[#e2e1e2] bg-[#f3f2f3]" />
                <span className="ml-[7px]">{a}<span className="underline">{b}</span>)</span>
              </div>
            ))}
          </div>
        </div>
      </div>
      {/* status bar */}
      <div className="h-[27px] shrink-0 bg-[#f3f2f3] flex items-center text-[14px] text-[#3a3a3a] whitespace-nowrap">
        <svg width="18" height="18" viewBox="0 0 18 18" className="ml-[8px]"><circle cx="8" cy="3" r="2" fill="none" stroke="#444" /><path d="M1 5l6 3v3l-4 6M15 5l-6 3v3l6 6M12 9l5 5M17 9l-5 5" fill="none" stroke="#444" /></svg>
        <span className="ml-[4px] w-[897px]">辅助功能: 调查</span>
        <span className="w-[117px]">平均值: 1955/4/13</span>
        <span className="w-[107px]">计数: 40</span>
        <span className="w-[148px]">最大值: 2010/7/28</span>
        <span className="w-[145px]">求和: 4111/5/27</span>
        <div className="w-[49px] h-full bg-[#dfdedf] flex items-center justify-center">
          <svg width="18" height="18" viewBox="0 0 18 18"><path d="M1 1h16v16H1zM1 6.3h16M1 11.6h16M6.3 1v16M11.6 1v16" fill="none" stroke="#444" /></svg>
        </div>
        <div className="w-[49px] flex justify-center">
          <svg width="16" height="18" viewBox="0 0 16 18"><rect x="1" y="1" width="14" height="16" fill="none" stroke="#444" /><rect x="4" y="4" width="8" height="10" fill="none" stroke="#444" /></svg>
        </div>
        <div className="w-[49px] flex justify-center">
          <svg width="16" height="18" viewBox="0 0 16 18"><path d="M1 1h14v16H1zM1 12h14M7 1v11" fill="none" stroke="#444" /></svg>
        </div>
        <div className="ml-[11px] w-[8px] h-px bg-[#333]" />
        <div className="ml-[4px] flex-1 h-px bg-[#555] flex items-center">
          <div className="ml-[62px] w-[5px] h-[14px] bg-[#555] shrink-0" />
        </div>
      </div>
      {/* taskbar */}
      <div className="h-[50px] shrink-0 bg-[#474747] flex">
        <div className="ml-[23px] flex">
          {task.map(([ic, on, act], i) => (
            <div key={i} className={"w-[62px] h-full flex flex-col items-center " + (act ? "bg-[#6e6e6e]" : "")}>
              <div className="flex-1 flex items-center justify-center pb-[3px]">{ic}</div>
              <div className={"h-[3px] " + (act ? "w-full" : "w-[52px]") + (on ? " bg-[#7fa8d0]" : "")} />
            </div>
          ))}
        </div>
        <svg width="20" height="24" viewBox="0 0 20 24" className="ml-auto mr-[8px] mt-[13px]"><path d="M13 1l5 3-8 14c-2 3-8 4-8 1 0-3 3-4 5-3l7-13" fill="none" stroke="#eee" strokeWidth="1.3" /></svg>
      </div>
      {/* subtitle overlay */}
      <div className="absolute left-[670px] top-[962px] text-[32px] leading-[42px] font-bold text-white whitespace-nowrap [-webkit-text-stroke:5px_#000] [paint-order:stroke_fill]">来制作我们想要的效果的话</div>
      {/* mouse cursor */}
      <svg width="14" height="20" viewBox="0 0 14 20" className="absolute left-[713px] top-[152px]"><path d="M1 1v15l4-3 3 6 2-1-3-6h5z" fill="#fff" stroke="#222" /></svg>
    </div>
  );
}
